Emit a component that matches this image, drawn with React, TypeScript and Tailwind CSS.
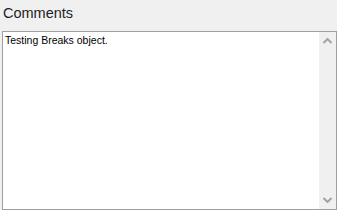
import React from "react";

export default function App() {
  return (
    <div className="w-[337px] h-[210px] bg-[#f0f0f0] flex flex-col overflow-hidden">
      <div
        className="h-[31px] pl-[3px] pt-[3px] text-[14.5px] leading-[20px] text-[#1e1e1e]"
        style={{ fontFamily: '"Segoe UI", "Liberation Sans", Arial, sans-serif' }}
      >
        Comments
      </div>
      <div className="ml-[2px] w-[335px] h-[179px] border border-[#a0a0a0] bg-white flex">
        <div
          className="flex-1 pl-[2px] pt-[2px] text-[10.5px] leading-[13px] text-black"
          style={{ fontFamily: '"Liberation Sans", Arial, sans-serif' }}
        >
          Testing Breaks object.
        </div>
        <div className="w-[17px] bg-[#f0f0f0] flex flex-col justify-between items-center py-[6px]">
          <svg width="9" height="6" viewBox="0 0 9 6">
            <path d="M0.5 5 L4.5 1 L8.5 5" stroke="#a3a3a3" strokeWidth="2" fill="none" />
          </svg>
          <svg width="9" height="6" viewBox="0 0 9 6">
            <path d="M0.5 1 L4.5 5 L8.5 1" stroke="#a3a3a3" strokeWidth="2" fill="none" />
          </svg>
        </div>
      </div>
    </div>
  );
}
